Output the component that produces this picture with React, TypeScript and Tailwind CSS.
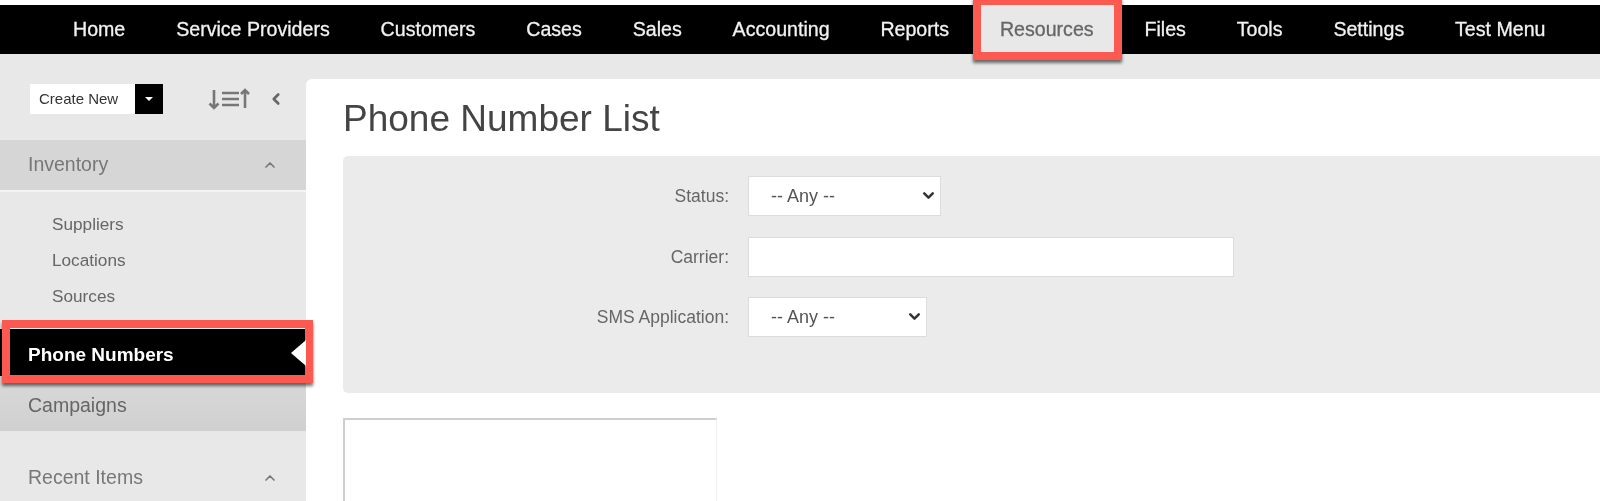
import { ChevronDown, ChevronLeft, ChevronUp } from "lucide-react";

const navItems = ["Home", "Service Providers", "Customers", "Cases", "Sales", "Accounting", "Reports", "Resources", "Files", "Tools", "Settings", "Test Menu"];

const SortIcon = () => (
  <svg width="42" height="24" viewBox="0 0 42 24" fill="none" stroke="#777" strokeWidth="2.6">
    <path d="M6 3v18M1.500 16.500 6 21l4.500-4.500" />
    <path d="M14 6h17M14 12h17M14 18h17" />
    <path d="M37 21V3M33 7l4-4 4 4" />
  </svg>
);

const Select = ({ width }: { width: string }) => (
  <div className={`relative h-[40px] ${width}`}>
    <select className="h-full w-full appearance-none border border-[#dcdcdc] bg-white pl-[22px] pt-[1px] text-[18px] text-[#555]">
      <option>-- Any --</option>
    </select>
    <ChevronDown className="absolute right-[4px] top-[11px] h-[17px] w-[17px] text-[#333]" strokeWidth={3.5} />
  </div>
);

const App = () => {
  return (
    <div className="h-[501px] w-[1600px] overflow-hidden bg-white pt-[5px] font-['Liberation_Sans',Arial,sans-serif] blur-[0.6px]">
      {/* Top nav */}
      <nav className="flex h-[49px] items-center gap-[50.900px] bg-black pl-[73px] text-[19.600px] text-[#f2f2f2] [-webkit-text-stroke:0.3px]">
        {navItems.map((item) =>
          item === "Resources" ? (
            <a key={item} href="#" className="relative z-10 text-[#666]">
              <span className="absolute -bottom-[16px] -left-[27px] -right-[28px] -top-[18px] border-[8px] border-[#fc5a50] bg-[#e8e8e8] shadow-[0_3px_3px_rgba(0,0,0,0.55)]"></span>
              <span className="relative">{item}</span>
            </a>
          ) : (
            <a key={item} href="#">{item}</a>
          )
        )}
      </nav>

      <div className="flex h-[447px] bg-[#e8e8e8]">
        {/* Sidebar */}
        <aside className="w-[306px] shrink-0 text-[19.500px] text-[#777]">
          <div className="flex h-[86px] items-center pl-[30px] pt-[3px]">
            <div className="flex h-[30px] w-[133px] bg-white text-[15px] text-[#333]">
              <span className="flex-1 pl-[9px] leading-[30px]">Create New</span>
              <span className="flex w-[28px] items-center justify-center bg-black">
                <span className="h-0 w-0 border-x-[4px] border-t-[4px] border-x-transparent border-t-white"></span>
              </span>
            </div>
            <div className="ml-[45px]"><SortIcon /></div>
            <ChevronLeft className="ml-[17px] h-[18px] w-[18px] text-[#666]" strokeWidth={3.5} />
          </div>

          <div className="flex h-[50px] items-center justify-between bg-[#d6d6d6] px-[28px]">
            <span>Inventory</span>
            <ChevronUp className="h-[16px] w-[16px] text-[#777]" strokeWidth={2.5} />
          </div>
          <div className="h-[2px] bg-[#f4f4f4]"></div>

          <ul className="flex h-[137px] flex-col gap-[16px] pl-[52px] pt-[22px] text-[17.200px] leading-[20px] text-[#666]">
            <li>Suppliers</li>
            <li>Locations</li>
            <li>Sources</li>
          </ul>

          <div className="relative z-10 flex h-[47px] items-center bg-black pl-[28px] pt-[5px] text-[19px] font-bold text-white">
            <span className="absolute -bottom-[7px] left-[2px] -right-[7px] -top-[9px] border-[8px] border-[#fc5a50] shadow-[0_3px_3px_rgba(0,0,0,0.55)]"></span>
            <span className="relative">Phone Numbers</span>
            <span className="absolute right-0 top-[11px] h-0 w-0 border-y-[13px] border-r-[15px] border-y-transparent border-r-white"></span>
          </div>
          <div className="flex h-[55px] items-end bg-gradient-to-b from-[#d9d9d9] to-[#d0d0d0] pb-[11px] pl-[28px] text-[#666]">Campaigns</div>

          <div className="flex h-[94px] items-center justify-between px-[28px]">
            <span>Recent Items</span>
            <ChevronUp className="h-[16px] w-[16px] text-[#777]" strokeWidth={2.5} />
          </div>
        </aside>

        {/* Main content */}
        <main className="mt-[25px] flex-1 rounded-tl-[6px] bg-white pl-[37px]">
          <h1 className="pt-[18px] text-[37px] leading-[44px] text-[#444]">Phone Number List</h1>

          <div className="mt-[15px] h-[237px] rounded-l-[5px] bg-[#ebebeb] pt-[20px] text-[17.500px] text-[#666]">
            <div className="flex h-[40px] items-center">
              <label className="w-[386px] text-right">Status:</label>
              <div className="ml-[19px]"><Select width="w-[193px]" /></div>
            </div>
            <div className="mt-[21px] flex h-[40px] items-center">
              <label className="w-[386px] text-right">Carrier:</label>
              <input className="ml-[19px] h-[40px] w-[486px] border border-[#dcdcdc] bg-white" />
            </div>
            <div className="mt-[20px] flex h-[40px] items-center">
              <label className="w-[386px] text-right">SMS Application:</label>
              <div className="ml-[19px]"><Select width="w-[179px]" /></div>
            </div>
          </div>

          <div className="mt-[25px] h-[120px] w-[374px] border-2 border-b-0 border-r border-[#cfcfcf] border-r-[#eeeeee]"></div>
        </main>
      </div>
    </div>
  );
};

export default App;
